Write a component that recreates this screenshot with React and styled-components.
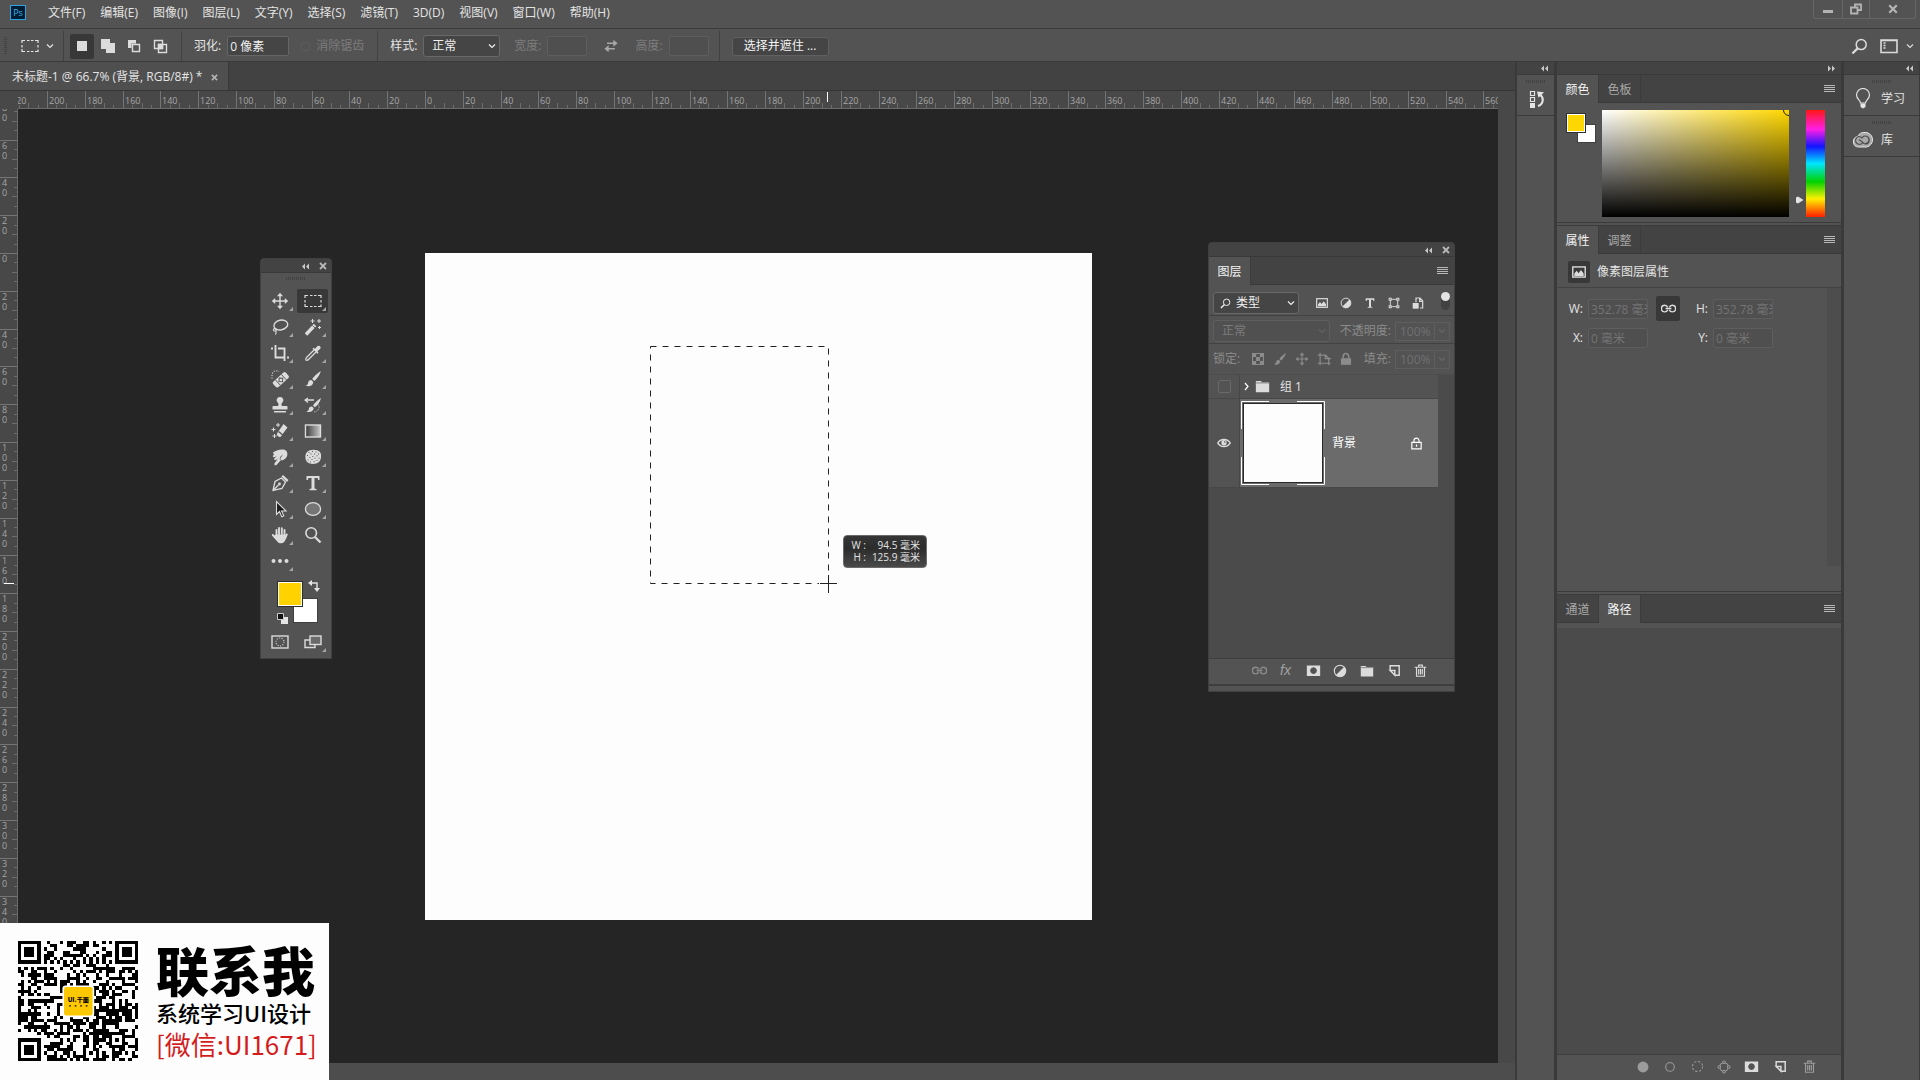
import React from 'react';
import styled, { createGlobalStyle } from 'styled-components';

const GlobalStyle = createGlobalStyle`
  * {
    box-sizing: border-box;
  }
  body {
    margin: 0;
    background: #535353;
    color: #e4e4e4;
    font-family: 'Open Sans', 'Noto Sans CJK SC', sans-serif;
    font-size: 12px;
    line-height: 16px;
    overflow: hidden;
  }
  button, input, select {
    font: inherit;
    color: inherit;
    margin: 0;
    padding: 0;
  }
  svg {
    display: block;
    flex: none;
  }
`;

/* ---------- layout ---------- */

const Page = styled.div`
  height: 100vh;
  display: flex;
  flex-direction: column;
`;

const MenuBar = styled.header`
  height: 29px;
  flex: none;
  display: flex;
  align-items: flex-start;
  padding-left: 10px;
  border-bottom: 1px solid #3a3a3a;
`;

const MenuNav = styled.nav`
  display: flex;
  gap: 15px;
  margin-left: 22px;
  padding-top: 5px;
`;

const MenuItem = styled.button`
  border: 0;
  background: none;
  white-space: nowrap;
`;

const PsLogo = styled.svg`
  margin-top: 5px;
`;

const WindowButtons = styled.div`
  display: flex;
  margin-left: auto;
  margin-right: 4px;
  border: 1px solid #666;
  border-top: 0;
  border-radius: 0 0 3px 3px;
`;

const WindowButton = styled.button`
  width: ${(p) => p.$width}px;
  height: 18px;
  display: flex;
  align-items: center;
  justify-content: center;
  border: 0;
  border-left: ${(p) => (p.$first ? '0' : '1px solid #666')};
  background: none;
  color: #b4b4b4;
`;

const OptionsBar = styled.div`
  height: 33px;
  flex: none;
  display: flex;
  align-items: center;
  padding: 2px 4px 0;
  border-bottom: 1px solid #3a3a3a;
  white-space: nowrap;
`;

const OptionGroup = styled.div`
  display: flex;
  align-items: center;
  gap: ${(p) => p.$gap || 6}px;
  height: 100%;
  padding: 0 ${(p) => p.$right || 12}px 0 ${(p) => p.$left || 12}px;
  border-right: ${(p) => (p.$last ? '0' : '1px solid #424242')};
  color: ${(p) => (p.$off ? '#7c7c7c' : '#e4e4e4')};
`;

const Body = styled.main`
  flex: 1;
  min-height: 0;
  display: flex;
`;

const DocumentArea = styled.section`
  flex: 1;
  min-width: 0;
  display: flex;
  flex-direction: column;
  background: #424242;
`;

const DocTabs = styled.div`
  height: 29px;
  flex: none;
  display: flex;
  border-bottom: 1px solid #353535;
`;

const DocTab = styled.div`
  display: flex;
  align-items: center;
  gap: 8px;
  padding: 2px 10px 0 12px;
  background: #4f4f4f;
  border-right: 1px solid #383838;
  white-space: nowrap;
`;

const IconButton = styled.button`
  display: flex;
  align-items: center;
  justify-content: center;
  width: ${(p) => p.$width || 20}px;
  height: ${(p) => p.$height || 20}px;
  flex: none;
  border: 0;
  border-radius: 2px;
  background: ${(p) => (p.$active ? '#383838' : 'none')};
  color: ${(p) => p.$color || '#dcdcdc'};
`;

const DocGrid = styled.div`
  flex: 1;
  min-height: 0;
  display: grid;
  grid-template-columns: 18px minmax(0, 1fr) 17px;
  grid-template-rows: 18px minmax(0, 1fr) 17px;
`;

const RulerBox = styled.div`
  background: #484848;
  overflow: hidden;
  border-right: ${(p) => (p.$side ? '1px solid #6a6a6a' : '0')};
  border-bottom: ${(p) => (p.$side ? '0' : '1px solid #6a6a6a')};
`;

const Gutter = styled.div`
  background: #484848;
`;

const BottomBar = styled.div`
  grid-column: 1 / 4;
  background: #4d4d4d;
`;

const Canvas = styled.div`
  position: relative;
  background: #252525;
`;

const Paper = styled.div`
  position: absolute;
  left: 407px;
  top: 144px;
  width: 667px;
  height: 667px;
  background: #fdfdfd;
`;

const Marquee = styled.svg`
  position: absolute;
  left: 632px;
  top: 237px;
`;

const SizeTip = styled.div`
  position: absolute;
  left: 825px;
  top: 426px;
  display: grid;
  grid-template-columns: 18px 1fr;
  width: 84px;
  padding: 3px 6px 4px 4px;
  border: 1px solid #6b6b6b;
  border-radius: 4px;
  background: linear-gradient(#363636, #2c2c2c 40%, #4a4a4a);
  font-size: 10px;
  line-height: 12px;
  text-align: right;
  white-space: nowrap;
`;

/* ---------- floating tool box ---------- */

const FloatWindow = styled.div`
  position: absolute;
  display: flex;
  flex-direction: column;
  left: ${(p) => p.$left}px;
  top: ${(p) => p.$top}px;
  width: ${(p) => p.$width}px;
  background: #535353;
  border: 1px solid #404040;
  border-radius: 4px 4px 0 0;
`;

const FloatHead = styled.div`
  display: flex;
  align-items: center;
  justify-content: flex-end;
  gap: 5px;
  height: 14px;
  padding: 1px 2px 0 0;
  background: #434343;
  border-bottom: 1px solid #393939;
  border-radius: 3px 3px 0 0;
`;

const GripRow = styled.div`
  display: flex;
  justify-content: center;
  height: ${(p) => p.$height}px;
  padding-top: ${(p) => p.$top || 0}px;
`;

const Grip = styled.div`
  width: ${(p) => (p.$small ? 3 : 20)}px;
  height: ${(p) => (p.$small ? 18 : 3)}px;
  background: repeating-linear-gradient(
    ${(p) => (p.$small ? '180deg' : '90deg')},
    #434343 0 1px,
    transparent 1px 2px
  );
`;

const ToolGrid = styled.div`
  display: grid;
  grid-template-columns: 31px 31px;
  grid-auto-rows: 24px;
  gap: 2px;
  padding: 0 3px;
`;

const ToolButton = styled.button`
  position: relative;
  display: flex;
  align-items: center;
  justify-content: center;
  border: 0;
  border-radius: 2px;
  background: ${(p) => (p.$active ? '#383838' : 'none')};
  color: #dcdcdc;
  &::after {
    content: '';
    position: absolute;
    right: 2px;
    bottom: 2px;
    border: 2px solid transparent;
    border-right-color: #a5a5a5;
    border-bottom-color: #a5a5a5;
    display: ${(p) => (p.$plain ? 'none' : 'block')};
  }
`;

const ToolSwatches = styled.div`
  position: relative;
  height: 57px;
`;

const Swatch = styled.button`
  position: absolute;
  left: ${(p) => p.$left}px;
  top: ${(p) => p.$top}px;
  width: ${(p) => p.$size}px;
  height: ${(p) => p.$size}px;
  border: 1px solid ${(p) => (p.$ring ? '#fff' : '#404040')};
  outline: ${(p) => (p.$ring ? '1px solid #2e2e2e' : '0')};
  background: ${(p) => p.$color};
`;

const SwatchIcon = styled.button`
  position: absolute;
  left: ${(p) => p.$left}px;
  top: ${(p) => p.$top}px;
  border: 0;
  background: none;
`;

/* ---------- form parts ---------- */

const Field = styled.input`
  width: ${(p) => p.$width}px;
  height: 20px;
  padding-left: 2px;
  border: 1px solid #666;
  border-radius: 2px;
  background: ${(p) => (p.disabled ? '#4f4f4f' : '#454545')};
  color: ${(p) => (p.disabled ? '#747474' : '#f0f0f0')};
  border-color: ${(p) => (p.disabled ? '#5e5e5e' : '#666')};
`;

const SelectBox = styled.span`
  position: relative;
  display: inline-flex;
  align-items: center;
  width: ${(p) => p.$width}px;
  height: 22px;
  color: ${(p) => (p.$off ? '#7c7c7c' : '#f0f0f0')};
  svg {
    position: absolute;
    pointer-events: none;
  }
  svg:last-child {
    right: 3px;
    opacity: ${(p) => (p.$off ? 0.4 : 1)};
  }
  svg:first-child {
    left: 7px;
  }
  select {
    appearance: none;
    width: 100%;
    height: 100%;
    padding-left: ${(p) => p.$indent || 8}px;
    border: 1px solid ${(p) => (p.$off ? '#5e5e5e' : '#686868')};
    border-radius: 3px;
    background: ${(p) => (p.$off ? '#505050' : '#454545')};
    opacity: 1;
  }
`;

const CheckBox = styled.input`
  appearance: none;
  width: ${(p) => p.$size}px;
  height: ${(p) => p.$size}px;
  border: 1px solid ${(p) => p.$line};
  border-radius: 2px;
`;

const TextButton = styled.button`
  width: 97px;
  height: 19px;
  border: 1px solid #606060;
  border-radius: 3px;
  background: #454545;
  color: #f4f4f4;
  line-height: 16px;
`;

/* ---------- panels ---------- */

const TabRow = styled.div`
  display: flex;
  height: 28px;
  flex: none;
  background: #434343;
`;

const PanelTab = styled.button`
  width: 42px;
  padding-top: 2px;
  border: 0;
  border-right: 1px solid #3c3c3c;
  border-bottom: ${(p) => (p.$active ? '0' : '1px solid #393939')};
  background: ${(p) => (p.$active ? '#535353' : 'none')};
  color: ${(p) => (p.$active ? '#f4f4f4' : '#a8a8a8')};
`;

const TabRest = styled.div`
  flex: 1;
  display: flex;
  align-items: center;
  justify-content: flex-end;
  padding-right: 6px;
  border-bottom: 1px solid #393939;
`;

const LayerRow = styled.div`
  display: flex;
  align-items: center;
  height: ${(p) => p.$height}px;
  padding: ${(p) => p.$top || 0}px 4px 0;
  border-bottom: 1px solid ${(p) => (p.$last ? '#4d4d4d' : '#424242')};
  color: ${(p) => (p.$off ? '#8c8c8c' : '#dcdcdc')};
  white-space: nowrap;
`;

const IconSet = styled.div`
  display: flex;
  align-items: center;
  gap: ${(p) => p.$gap}px;
  margin-left: ${(p) => p.$left || 0}px;
`;

const Toggle = styled.button`
  width: 9px;
  height: 18px;
  margin: 0 0 4px auto;
  padding: 0;
  border: 0;
  border-radius: 5px;
  background: #424242;
  &::before {
    content: '';
    display: block;
    width: 9px;
    height: 9px;
    margin-bottom: 9px;
    border-radius: 50%;
    background: #e4e4e4;
  }
`;

const Percent = styled.label`
  display: flex;
  align-items: center;
  gap: 4px;
  margin-left: auto;
  color: #8a8a8a;
`;

const PercentBox = styled.span`
  display: flex;
  align-items: center;
  border: 1px solid #5e5e5e;
  input {
    width: 39px;
    height: 17px;
    padding-left: 4px;
    border: 0;
    border-right: 1px solid #5e5e5e;
    background: none;
    color: #707070;
  }
  svg {
    margin: 0 2px;
    color: #666;
  }
`;

const LayerList = styled.div`
  height: 283px;
  background: #4b4b4b;
`;

const LayerItem = styled.div`
  display: flex;
  height: ${(p) => p.$height}px;
  margin-right: 16px;
  border-bottom: 1px solid #474747;
  background: #535353;
`;

const EyeCell = styled.div`
  display: flex;
  align-items: center;
  justify-content: center;
  width: 31px;
  border-right: 1px solid #474747;
`;

const LayerBody = styled.div`
  flex: 1;
  display: flex;
  align-items: center;
  gap: ${(p) => p.$gap}px;
  padding: 0 15px 0 ${(p) => p.$left}px;
  background: ${(p) => (p.$selected ? '#6b6b6b' : 'none')};
  color: #fff;
`;

const Thumb = styled.svg`
  display: block;
`;

const Spacer = styled.span`
  flex: 1;
`;

const PanelFoot = styled.div`
  display: flex;
  align-items: center;
  justify-content: flex-end;
  gap: 11px;
  height: 26px;
  flex: none;
  padding: 0 ${(p) => p.$right}px 2px 0;
  border-top: 1px solid #3e3e3e;
`;

const FloatFoot = styled.div`
  height: 7px;
  border-top: 2px solid #3e3e3e;
`;

/* ---------- right dock ---------- */

const Dock = styled.aside`
  display: flex;
  flex: none;
  gap: 3px;
  padding: 0 1px 0 2px;
  background: #3a3a3a;
`;

const DockColumn = styled.div`
  display: flex;
  flex-direction: column;
  width: ${(p) => p.$width}px;
  background: #535353;
`;

const DockHead = styled.div`
  display: flex;
  align-items: center;
  justify-content: flex-end;
  height: 13px;
  flex: none;
  padding-right: 5px;
  background: #434343;
  border-bottom: 1px solid #3a3a3a;
`;

const DockItem = styled.div`
  height: 41px;
  border-bottom: 1px solid #3a3a3a;
`;

const DockButton = styled.button`
  display: flex;
  align-items: center;
  justify-content: ${(p) => (p.$center ? 'center' : 'flex-start')};
  gap: 7px;
  width: 100%;
  height: 28px;
  padding-left: ${(p) => (p.$center ? 2 : 8)}px;
  border: 0;
  background: none;
  color: #e4e4e4;
`;

const ColorBody = styled.div`
  display: flex;
  height: 119px;
  padding: 7px 16px 0 9px;
`;

const ColorPair = styled.div`
  position: relative;
  width: 36px;
`;

const ColorField = styled.div`
  flex: 1;
  height: 107px;
  overflow: hidden;
  background: linear-gradient(to top, #000, transparent), linear-gradient(to right, #fff, #ffd700);
  display: flex;
  justify-content: flex-end;
`;

const HueMark = styled.div`
  width: 17px;
  padding: 86px 0 0 7px;
`;

const HueStrip = styled.div`
  width: 19px;
  height: 107px;
  background: linear-gradient(#ff1616, #ff1ee6 18%, #1414ff 34%, #00e6ff 50%, #00d200 67%, #fff000 83%, #ff1e00);
`;

const PanelSection = styled.section`
  display: flex;
  flex-direction: column;
  flex: ${(p) => (p.$grow ? '1' : 'none')};
  min-height: 0;
  border-top: ${(p) => (p.$first ? '0' : '4px double #3a3a3a')};
`;

const PropertyTitle = styled.div`
  display: flex;
  align-items: center;
  gap: 7px;
  height: 34px;
  padding: 2px 0 0 11px;
  border-bottom: 1px solid #424242;
`;

const PropertyBody = styled.div`
  display: flex;
  height: 303px;
`;

const PropertyGrid = styled.div`
  flex: 1;
  display: grid;
  grid-template-columns: 16px 60px 25px 16px 60px;
  grid-auto-rows: 25px;
  align-content: start;
  align-items: center;
  gap: 4px 8px;
  padding: 8px 0 0 7px;
  label {
    text-align: right;
    margin-right: -3px;
  }
`;

const ScrollTrack = styled.div`
  width: 14px;
  height: 278px;
  background: #4d4d4d;
`;

const PathList = styled.div`
  flex: 1;
  margin-top: 5px;
  background: #4b4b4b;
`;

/* ---------- contact card ---------- */

const ContactCard = styled.section`
  position: fixed;
  left: 0;
  bottom: 0;
  display: flex;
  gap: 18px;
  width: 329px;
  height: 157px;
  padding: 18px 0 0 18px;
  background: #fdfdfd;
  color: #000;
  font-family: 'Noto Sans CJK SC', sans-serif;
  white-space: nowrap;
`;

const CardText = styled.div`
  display: flex;
  flex-direction: column;
`;

const CardTitle = styled.h2`
  margin: 0;
  font-size: 53px;
  line-height: 56px;
  font-weight: 900;
`;

const CardSub = styled.p`
  margin: 0;
  font-size: 22px;
  line-height: 30px;
  font-weight: 500;
`;

const CardContact = styled.p`
  margin: 0;
  font-size: 26px;
  line-height: 34px;
  color: #d41c1c;
`;

/* ---------- icons ---------- */

const Icon = ({ size = 18, box = 18, children, ...rest }) => (
  <svg
    width={size}
    height={size}
    viewBox={`0 0 ${box} ${box}`}
    fill="none"
    stroke="currentColor"
    strokeWidth="1.4"
    aria-hidden="true"
    {...rest}
  >
    {children}
  </svg>
);

const Chevron = () => (
  <Icon size={10} box={10}>
    <path d="M2 3.5l3 3 3-3" strokeWidth="1.2" />
  </Icon>
);

const DoubleArrow = ({ right }) => (
  <Icon size={9} box={9} fill="#c8c8c8" stroke="none">
    <path d={right ? 'M1 1.5l3 3-3 3zM5 1.5l3 3-3 3z' : 'M4 1.5l-3 3 3 3zM8 1.5l-3 3 3 3z'} />
  </Icon>
);

const CloseIcon = ({ size = 8 }) => (
  <Icon size={size} box={8}>
    <path d="M1 1l6 6M7 1L1 7" strokeWidth="1.8" />
  </Icon>
);

const MenuIcon = () => (
  <Icon size={11} box={11}>
    <path d="M0 2.500h11M0 4.500h11M0 6.500h11M0 8.500h11" strokeWidth="1" />
  </Icon>
);

const MarqueeIcon = () => (
  <Icon>
    <path d="M1 6V3.5h3M6 3.5h2.5M10 3.5h2.5M14 3.5h3V6M17 8v2.5M17 12.500v2h-3M12.500 14.500h-2.500M8.500 14.500h-2.500M4 14.500h-3V12M1 10.500V8" strokeWidth="1.2" />
  </Icon>
);

const MoveIcon = ({ size }) => (
  <Icon size={size}>
    <path d="M9 3v12M3 9h12" />
    <path d="M9 .8l3 3.400H6zM9 17.200l3-3.400H6zM.8 9l3.400-3v6zM17.200 9l-3.400-3v6z" fill="currentColor" stroke="none" />
  </Icon>
);

const LassoIcon = () => (
  <Icon>
    <ellipse cx="9.800" cy="7" rx="7" ry="4.800" transform="rotate(-12 9.800 7)" />
    <path d="M4.500 10.500c-2.500-.5-2.800 2.500-.6 2.500 2.500 0 1.500-3 .2-1.500M4.500 13c1 1 .8 2.500-.3 3.500" strokeWidth="1.100" />
  </Icon>
);

const WandIcon = () => (
  <Icon>
    <path d="M2 16.500L11 7" strokeWidth="3.400" />
    <path d="M8.300 7.300l2.800 2.800" stroke="#535353" strokeWidth=".9" />
    <path d="M8.500 1v4M6.500 3h4M15 1v4M13 3h4M15.500 8v3M14 9.500h3" strokeWidth="1" />
  </Icon>
);

const CropIcon = ({ size }) => (
  <Icon size={size}>
    <path d="M0 4.500h2M4.500 1v12.500H14M7 4.500h6.500V17M16 13.500h2" strokeWidth="1.900" />
  </Icon>
);

const EyedropperIcon = () => (
  <Icon>
    <path d="M10 6L3 13c-1 1-1.500 2.500-1 3 .6.500 2 0 3-1l7-7" strokeWidth="1.300" />
    <path d="M8.500 4.800l1-1 1.500 1 2.300-2.500c1.800-1.800 4.600.8 2.700 2.700L13.500 7.200l1 1.500-1 1z" fill="currentColor" stroke="none" />
  </Icon>
);

const HealIcon = () => (
  <Icon>
    <g transform="rotate(-42 10 10)">
      <rect x="1.500" y="6" width="17" height="7.500" rx="2" fill="currentColor" stroke="none" />
      <path d="M6 6v7.500M14 6v7.500" stroke="#535353" strokeWidth=".9" />
      <path d="M10 7.300l2.500 2.500-2.500 2.500-2.500-2.500z" stroke="#535353" strokeWidth="1" />
    </g>
    <path d="M1 8.500V5.500a4.500 4.500 0 0 1 7-4" strokeDasharray="1 1.500" strokeWidth="1.200" />
  </Icon>
);

const BrushIcon = ({ size }) => (
  <Icon size={size} fill="currentColor" stroke="none">
    <path d="M16.800 1c-3 1.800-7 5.400-8.600 8l2 2c2.600-1.800 5.600-6 6.600-10zM7.300 10c-2 0-3 1.200-3.200 3-.2 1.300-1.200 2.200-2.600 2.600 3 1.600 7.400.800 7.800-3.600z" />
  </Icon>
);

const StampIcon = () => (
  <Icon fill="currentColor" stroke="none">
    <path d="M9 1a3.300 3.300 0 0 1 2 6c-.8.800-.6 2 0 3h4.500c.8 0 1 .5 1 1v2.500h-15V11c0-.5.200-1 1-1H7c.600-1 .800-2.200 0-3a3.300 3.300 0 0 1 2-6zM3 15h12v1.500H3z" />
  </Icon>
);

const HistoryBrushIcon = () => (
  <Icon>
    <path d="M17 2c-3 1.500-6.500 5-8 7.500l1.800 1.800C13.500 9.500 16 6 17 2zM8 10.500c-2.200 0-3 1-3.200 2.800-.2 1.200-1 1.800-2.300 2.200 3 1.300 6.800.5 7.200-3.400z" fill="currentColor" stroke="none" />
    <path d="M1 4h9M4 2L1 4l3 2.500" strokeWidth="1.300" />
    <path d="M14 8.500c2.500 2.500.5 7-4 7.500" strokeDasharray="1 1.300" strokeWidth="1" />
  </Icon>
);

const EraserIcon = () => (
  <Icon>
    <path d="M12.500 2l4 3.500-6.800 9.200c-1 1.300-4.800-1.700-3.700-3.200z" fill="currentColor" stroke="none" />
    <path d="M7.500 9.500l4 3.200" stroke="#535353" />
    <path d="M7 1v4M5 3h4M2.500 5.500v4M.5 7.500h4M3.500 12v4M1.500 14h4" strokeWidth="1" />
  </Icon>
);

const GradientIcon = () => (
  <Icon>
    <defs>
      <linearGradient id="toolGradient">
        <stop offset="0" stopColor="#3a3a3a" />
        <stop offset="1" stopColor="#c8c8c8" />
      </linearGradient>
    </defs>
    <rect x="1.500" y="3" width="15" height="12" fill="url(#toolGradient)" />
  </Icon>
);

const SmudgeIcon = () => (
  <Icon fill="currentColor" stroke="none">
    <path d="M2 4.500C4 2.500 9 1 12.500 1.500c3 .4 4.500 3 3.700 6-.5 2-2 3.500-3.500 4.300-1 .7-2 .7-2.700.3L5.500 17c-1.200 1-2.800-.3-1.900-1.700L7 10.500c-1 1-2.500 2-3.400 1.400-.8-.6-.3-1.500.4-2.100l2-2C4.500 9 3 9.500 2.200 8.900c-.8-.6-.2-1.500.8-2.200z" />
    <path d="M9.500 11.500c-1-1 .5-3.500 2-4.500" stroke="#535353" strokeWidth=".9" fill="none" />
  </Icon>
);

const SpongeIcon = () => (
  <Icon>
    <path d="M3 4c3-3 10-3 13 0 2 3 1 8-1 10-3 2.500-9 2.500-12 0-2.300-3-2-8 0-10z" fill="currentColor" stroke="none" />
    <path d="M4.500 4.500h1M8 3.500h1M11.500 4h1M14 6h1M6.500 6h1M10 6h1M3 7.500h1M12.500 7.800h1M8.300 8.500h1M5.300 9.500h1M10.500 10.200h1M14.500 10.200h1M3.500 12h1M7.500 11.500h1M12.500 12.500h1M9.700 13.800h1M6 14h1" stroke="#4c4c4c" strokeWidth=".9" />
  </Icon>
);

const PenIcon = () => (
  <Icon>
    <path d="M2 16.500l2-9 6.500-3.500 4 4-3.500 6.500zM2 16.500l5.500-5.500" strokeWidth="1.300" />
    <path d="M10.500 2.500L12 1l5.500 5L16 8z" fill="currentColor" stroke="none" />
    <circle cx="8.500" cy="10" r="1.400" fill="currentColor" stroke="none" />
  </Icon>
);

const TypeIcon = ({ size }) => (
  <Icon size={size} fill="currentColor" stroke="none">
    <path d="M2.500 2h13v4h-1.300L13.500 4h-3v10.500l2 .5v1.200h-7V15l2-.5V4h-3L3.800 6H2.500z" />
  </Icon>
);

const ArrowIcon = () => (
  <Icon>
    <path d="M5.500 1.500v13l3-3 2.300 5.300 2-1L10.500 11H15z" fill="#1c1c1c" strokeWidth="1.100" />
  </Icon>
);

const EllipseIcon = () => (
  <Icon>
    <ellipse cx="9" cy="9" rx="7.600" ry="6.300" fill="#757575" strokeWidth="1.300" />
  </Icon>
);

const HandIcon = () => (
  <Icon>
    <path d="M5.500 9V4M8 8.500V2M10.800 8.500V2.200M13.500 9.500V4M15.800 8.500l-1.600 4M1.800 9l3.500 3.500" strokeWidth="1.900" strokeLinecap="round" />
    <path d="M4.500 8.500h10v4c0 3-2 4.800-4.500 4.800-2 0-3-.8-4.200-2.300L2.500 11z" fill="currentColor" stroke="none" />
  </Icon>
);

const ZoomIcon = ({ size, flip }) => (
  <Icon size={size}>
    <g transform={flip ? 'translate(18 0) scale(-1 1)' : undefined}>
      <circle cx="7.200" cy="7" r="5.300" strokeWidth="1.600" />
      <path d="M11 11l5.500 5.500" strokeWidth="2.300" />
    </g>
  </Icon>
);

const DotsIcon = () => (
  <Icon fill="currentColor" stroke="none">
    <circle cx="2.500" cy="9" r="2" />
    <circle cx="9" cy="9" r="2" />
    <circle cx="15.500" cy="9" r="2" />
  </Icon>
);

const QuickMaskIcon = () => (
  <Icon>
    <rect x="1" y="3" width="16" height="12" />
    <circle cx="9" cy="9" r="4" strokeDasharray="1 1.500" strokeWidth="1.100" />
  </Icon>
);

const ScreenIcon = () => (
  <Icon>
    <path d="M6 7H1v7.500h10V12" />
    <rect x="6" y="3" width="11" height="8.500" fill="#6b6b6b" />
  </Icon>
);

const ImageIcon = ({ size }) => (
  <Icon size={size}>
    <rect x="1" y="2.500" width="16" height="13" strokeWidth="1.800" />
    <path d="M3 14v-3l3-3.500 2.500 3 3-4 3.500 4.500v3z" fill="currentColor" stroke="none" />
  </Icon>
);

const AdjustIcon = ({ size }) => (
  <Icon size={size}>
    <circle cx="9" cy="9" r="7.300" />
    <path d="M14.200 3.800A7.300 7.300 0 0 1 3.800 14.200z" fill="currentColor" stroke="none" />
  </Icon>
);

const ShapeIcon = ({ size }) => (
  <Icon size={size}>
    <path d="M4 3.500h10M4 14.500h10M3.500 4v10M14.500 4v10" />
    <path d="M1 1h4.500v4.500H1zM12.500 1H17v4.500h-4.500zM1 12.500h4.500V17H1zM12.500 12.500H17V17h-4.500z" fill="currentColor" stroke="none" />
    <path d="M2.500 2.500h1.500v1.500H2.500zM14 2.500h1.500v1.500H14zM2.500 14h1.500v1.500H2.500zM14 14h1.500v1.500H14z" fill="#535353" stroke="none" />
  </Icon>
);

const SmartIcon = ({ size }) => (
  <Icon size={size}>
    <path d="M6 8V1.500h6l4 4v11h-4M11.500 2v4.500h4" strokeWidth="1.800" />
    <path d="M1 9h9v8.500H1z" fill="currentColor" stroke="none" />
  </Icon>
);

const CheckerIcon = ({ size }) => (
  <Icon size={size}>
    <rect x="2" y="2" width="14" height="14" />
    <path d="M2 2h4.500v4.500H2zM11.500 2H16v4.500h-4.500zM6.500 6.500h5v5h-5zM2 11.500h4.500V16H2zM11.500 11.500H16V16h-4.500z" fill="currentColor" stroke="none" />
  </Icon>
);

const ArtboardIcon = ({ size }) => (
  <Icon size={size}>
    <path d="M4 1v16M1 4h10l4 4v9M1 14.500h16.500M10.500 4v4.500H18" strokeWidth="1.500" />
  </Icon>
);

const SolidLockIcon = ({ size }) => (
  <Icon size={size}>
    <path d="M5.500 8V5.500a3.500 3.500 0 0 1 7 0V8" strokeWidth="2" />
    <path d="M2.500 8h13v8.500h-13z" fill="currentColor" stroke="none" />
  </Icon>
);

const LockIcon = ({ size }) => (
  <Icon size={size}>
    <path d="M5.500 7.500V5a3.500 3.500 0 0 1 7 0v2.500M2.500 7.500h13v9h-13zM9 10.500v3" strokeWidth="1.600" />
  </Icon>
);

const FolderIcon = ({ size }) => (
  <Icon size={size} fill="#dcdcdc" stroke="none">
    <path d="M1 2.500h6L8.500 4H17v12H1z" />
    <path d="M1 4.700h16" stroke="#535353" strokeWidth=".8" />
  </Icon>
);

const EyeIcon = () => (
  <Icon size={14} color="#dcdcdc">
    <path d="M1 9c3.500-6 12.500-6 16 0-3.500 6-12.500 6-16 0z" strokeWidth="1.900" />
    <circle cx="9" cy="8.700" r="3.400" fill="currentColor" stroke="none" />
    <circle cx="10" cy="7.800" r="1" fill="#535353" stroke="none" />
  </Icon>
);

const LinkIcon = ({ size }) => (
  <Icon size={size}>
    <path d="M8 7.500C7.300 5.600 5.500 5 4.500 5a4 4 0 0 0 0 8c1.500 0 3-.9 3.500-2.500M10 7.500C10.700 5.600 12.500 5 13.500 5a4 4 0 0 1 0 8c-1.500 0-3-.9-3.500-2.500M5.500 9h7" strokeWidth="1.700" />
  </Icon>
);

const FxIcon = () => (
  <svg width="16" height="16" viewBox="0 0 16 16" fill="currentColor" aria-hidden="true">
    <text x="2" y="12" fontSize="14" fontStyle="italic" fontFamily="Liberation Sans, sans-serif">fx</text>
  </svg>
);

const MaskIcon = ({ size }) => (
  <Icon size={size} fill="currentColor" stroke="none">
    <path fillRule="evenodd" d="M1 3h16v12.500H1zM9 5.200a4 4 0 1 0 .01 0z" />
  </Icon>
);

const NewLayerIcon = ({ size }) => (
  <Icon size={size}>
    <path d="M3 8V2.500h12.500v13H10M3 9h6.500v6.500z" strokeWidth="2" />
  </Icon>
);

const TrashIcon = ({ size }) => (
  <Icon size={size}>
    <path d="M1 4.500h16M6.500 4V1.500h5V4M3.500 4.500V17h11V4.500M6.500 7v7.500M9 7v7.500M11.500 7v7.500" strokeWidth="1.600" />
  </Icon>
);

const SwapIcon = () => (
  <Icon size={14}>
    <path d="M4 5.500h9M14 12.500H5" strokeWidth="2" />
    <path d="M12 1l5.500 4.500L12 10zM6 8L.5 12.500 6 17z" fill="currentColor" stroke="none" />
  </Icon>
);

const HistoryIcon = () => (
  <Icon>
    <path d="M2.500 1.500h4v4h-4zM2.500 7.500h4v4h-4z" strokeWidth="1.200" />
    <path d="M2 13h5v5H2z" fill="currentColor" stroke="none" />
    <path d="M10 16c5-1.500 6.500-7.500 2.500-11" strokeWidth="2" />
    <path d="M9 1.500l7 .8-5.500 5.500z" fill="currentColor" stroke="none" />
  </Icon>
);

const BulbIcon = () => (
  <Icon size={22} box={22}>
    <path d="M8.500 15c0-2.500-4-4-4-8a6.500 6.500 0 0 1 13 0c0 4-4 5.500-4 8z" strokeWidth="1.200" />
    <path d="M8.500 15.500h5v3.500l-2.500 1.500-2.500-1.500z" fill="currentColor" stroke="none" />
  </Icon>
);

const CloudIcon = () => (
  <Icon size={22} box={22}>
    <path d="M6.500 18a5.300 5.300 0 0 1-.8-10.500C7 4.500 9.500 3.500 12 3.500a7.300 7.300 0 0 1 2.500 14.500z" fill="#a8a8a8" strokeWidth="1" />
    <path d="M13 14.500a3.700 3.700 0 1 0-3-5.500l-1.500-1C6 6.500 3.300 9 3.600 12c.4 3.500 5.400 4.700 7.400 1.500M7 10.500l5 4c4 2 7-3 4-6" stroke="#4e4e4e" strokeWidth="1.100" />
  </Icon>
);

/* ---------- data ---------- */

const menus = ['文件(F)', '编辑(E)', '图像(I)', '图层(L)', '文字(Y)', '选择(S)', '滤镜(T)', '3D(D)', '视图(V)', '窗口(W)', '帮助(H)'];

const tools = [
  ['移动', MoveIcon],
  ['矩形选框', MarqueeIcon],
  ['套索', LassoIcon],
  ['魔棒', WandIcon],
  ['裁剪', CropIcon],
  ['吸管', EyedropperIcon],
  ['修复画笔', HealIcon],
  ['画笔', BrushIcon],
  ['仿制图章', StampIcon],
  ['历史记录画笔', HistoryBrushIcon],
  ['橡皮擦', EraserIcon],
  ['渐变', GradientIcon],
  ['涂抹', SmudgeIcon],
  ['海绵', SpongeIcon],
  ['钢笔', PenIcon],
  ['横排文字', TypeIcon],
  ['路径选择', ArrowIcon],
  ['椭圆', EllipseIcon],
  ['抓手', HandIcon],
  ['缩放', ZoomIcon],
  ['更多', DotsIcon],
];

// 20 mm on the ruler at 66.7%
const STEP = 37.8;

const Ruler = ({ origin, from, to, marker, side }) => {
  const marks = [];
  for (let i = from; i <= to; i += 1) {
    marks.push({ label: String(Math.abs(i * 20)), at: origin + i * STEP });
  }
  const line = (at, start) => {
    const p = Math.round(at) + 0.5;
    return side ? `M${start} ${p}H18` : `M${p} ${start}V18`;
  };
  return (
    <svg width="100%" height="100%" fill="#a6a6a6" fontFamily="Open Sans, sans-serif" fontSize="9">
      {marks.map((m) => (
        <g key={m.at}>
          <path d={line(m.at, 0)} stroke="#747474" />
          {[1, 2, 3].map((n) => (
            <path key={n} d={line(m.at + (n * STEP) / 4, n === 2 ? 12 : 14)} stroke="#6c6c6c" />
          ))}
          {side ? (
            m.label.split('').map((d, n) => (
              <text key={n} x="2" y={Math.round(m.at) + 9 + n * 10}>{d}</text>
            ))
          ) : (
            <text x={Math.round(m.at) + 2} y="13">{m.label}</text>
          )}
        </g>
      ))}
      <path d={side ? `M4 ${marker}.5H14` : `M${marker}.5 1V11`} stroke="#fff" />
    </svg>
  );
};

const QR = 37;

const inFinder = (x, y) => {
  const spots = [[0, 0], [QR - 7, 0], [0, QR - 7]];
  for (const [fx, fy] of spots) {
    const dx = x - fx;
    const dy = y - fy;
    if (dx >= -1 && dx <= 7 && dy >= -1 && dy <= 7) {
      const r = Math.max(Math.abs(dx - 3), Math.abs(dy - 3));
      return r === 3 || r <= 1 ? 1 : 0;
    }
  }
  const r = Math.max(Math.abs(x - 30), Math.abs(y - 30));
  if (r <= 2) return r === 1 ? 0 : 1;
  return null;
};

const qrPath = () => {
  let seed = 1671;
  let d = '';
  for (let y = 0; y < QR; y += 1) {
    for (let x = 0; x < QR; x += 1) {
      seed = (seed * 1103515245 + 12345) % 2147483648;
      const fixed = inFinder(x, y);
      const timing = x === 6 || y === 6 ? (x + y + 1) % 2 : null;
      const on = fixed ?? timing ?? (seed > 1040000000 ? 1 : 0);
      if (on) d += `M${x} ${y}h1v1h-1z`;
    }
  }
  return d;
};

const QrCode = () => (
  <svg width="120" height="120" viewBox={`0 0 ${QR} ${QR}`} role="img" aria-label="QR">
    <path d={qrPath()} fill="#000" shapeRendering="crispEdges" />
    <rect x="13.700" y="13.700" width="9.800" height="9.800" rx="1" fill="#fff" />
    <rect x="14.200" y="14.200" width="8.800" height="8.800" rx=".7" fill="#fcc800" />
    <text x="18.600" y="18.800" fontSize="1.900" fontWeight="900" textAnchor="middle">UI.千面</text>
    <path d="M15.800 20h.5M17.500 20h.5M19.200 20h.5M20.900 20h.5" stroke="#000" strokeWidth=".4" />
  </svg>
);

/* ---------- sections ---------- */

const Options = () => (
  <OptionsBar>
    <Grip $small />
    <OptionGroup $left={14} $right={8}>
      <MarqueeIcon />
      <Chevron />
    </OptionGroup>
    <OptionGroup $left={6} $right={9} $gap={2}>
      <IconButton $width={24} $height={25} $active aria-label="新选区">
        <Icon size={12} box={12} fill="currentColor" stroke="none"><path d="M1 1h10v10H1z" /></Icon>
      </IconButton>
      <IconButton $width={24} aria-label="添加到选区">
        <Icon size={16} box={16} fill="currentColor" stroke="none"><path d="M1 1h9v4h5v10H6v-4H1z" /></Icon>
      </IconButton>
      <IconButton $width={24} aria-label="从选区减去">
        <Icon size={14} box={14}><path d="M1 1h8v3.500H4.500V9H1z" fill="currentColor" stroke="none" /><path d="M5.500 5.500h7v7h-7z" /></Icon>
      </IconButton>
      <IconButton $width={24} aria-label="与选区交叉">
        <Icon size={15} box={15}><path d="M1.500 1.500h8v8h-8zM5.500 5.500h8v8h-8z" /><path d="M5.500 5.500h4v4h-4z" fill="currentColor" /></Icon>
      </IconButton>
    </OptionGroup>
    <OptionGroup>
      <label htmlFor="feather">羽化:</label>
      <Field id="feather" $width={62} defaultValue="0 像素" />
      <OptionGroup $off $last $left={6} $right={1}>
        <CheckBox type="checkbox" id="alias" disabled $size={9} $line="#5c5c5c" />
        <label htmlFor="alias">消除锯齿</label>
      </OptionGroup>
    </OptionGroup>
    <OptionGroup $right={9}>
      <label htmlFor="style">样式:</label>
      <SelectBox $width={77}>
        <select id="style"><option>正常</option></select>
        <Chevron />
      </SelectBox>
      <OptionGroup $off $last $left={8} $right={1}>
        <label htmlFor="optWidth">宽度:</label>
        <Field id="optWidth" $width={40} disabled />
      </OptionGroup>
      <IconButton $width={34} $color="#a8a8a8" aria-label="互换"><SwapIcon /></IconButton>
      <OptionGroup $off $last $left={1} $right={1}>
        <label htmlFor="optHeight">高度:</label>
        <Field id="optHeight" $width={40} disabled />
      </OptionGroup>
    </OptionGroup>
    <OptionGroup $last>
      <TextButton>选择并遮住 ...</TextButton>
    </OptionGroup>
    <Spacer />
    <IconButton $width={30} aria-label="搜索"><ZoomIcon size={17} flip /></IconButton>
    <IconButton $width={30} aria-label="工作区">
      <Icon><path d="M1 3h16v12.500H1zM1 3.500h16M3.500 6h2M3.500 8.500h2M3.500 11h2" strokeWidth="1.600" /></Icon>
    </IconButton>
    <IconButton $width={12} aria-label="工作区菜单"><Chevron /></IconButton>
  </OptionsBar>
);

const ToolBox = () => (
  <FloatWindow $left={242} $top={149} $width={72}>
    <FloatHead>
      <IconButton $width={14} $height={12} aria-label="折叠"><DoubleArrow /></IconButton>
      <IconButton $width={12} $height={12} $color="#b8b8b8" aria-label="关闭"><CloseIcon /></IconButton>
    </FloatHead>
    <GripRow $height={16} $top={4}><Grip /></GripRow>
    <ToolGrid>
      {tools.map(([name, Glyph]) => (
        <ToolButton key={name} aria-label={name} $active={name === '矩形选框'} $plain={name === '缩放'}>
          <Glyph />
        </ToolButton>
      ))}
    </ToolGrid>
    <ToolSwatches>
      <Swatch $left={32} $top={25} $size={25} $color="#fff" aria-label="背景色" />
      <Swatch $left={17} $top={9} $size={24} $color="#ffd200" $ring aria-label="前景色" />
      <SwatchIcon $left={47} $top={7} aria-label="互换颜色">
        <Icon size={12} box={12}><path d="M3 3h6v6" /><path d="M4 0v6L0 3zM6 8h6l-3 4z" fill="currentColor" stroke="none" /></Icon>
      </SwatchIcon>
      <SwatchIcon $left={16} $top={40} aria-label="默认颜色">
        <Icon size={11} box={11} stroke="none"><path d="M4 4h7v7H4z" fill="#e4e4e4" /><path d="M.500.500h6v6h-6z" fill="#111" stroke="#ccc" strokeWidth="1" /></Icon>
      </SwatchIcon>
    </ToolSwatches>
    <ToolGrid>
      <ToolButton $plain aria-label="快速蒙版"><QuickMaskIcon /></ToolButton>
      <ToolButton aria-label="屏幕模式"><ScreenIcon /></ToolButton>
    </ToolGrid>
    <GripRow $height={4} />
  </FloatWindow>
);

const LayersPanel = () => (
  <FloatWindow $left={1190} $top={133} $width={247}>
    <FloatHead>
      <IconButton $width={14} $height={12} aria-label="折叠"><DoubleArrow /></IconButton>
      <IconButton $width={12} $height={12} $color="#b8b8b8" aria-label="关闭"><CloseIcon /></IconButton>
    </FloatHead>
    <TabRow>
      <PanelTab $active>图层</PanelTab>
      <TabRest><IconButton $width={11} $color="#b8b8b8" aria-label="面板菜单"><MenuIcon /></IconButton></TabRest>
    </TabRow>
    <LayerRow $height={31} $top={6}>
      <SelectBox $width={86} $indent={22}>
        <ZoomIcon size={11} flip />
        <select aria-label="筛选"><option>类型</option></select>
        <Chevron />
      </SelectBox>
      <IconSet $gap={12} $left={17}>
        <ImageIcon size={12} />
        <AdjustIcon size={12} />
        <TypeIcon size={12} />
        <ShapeIcon size={12} />
        <SmartIcon size={12} />
      </IconSet>
      <Toggle aria-label="筛选开关" />
    </LayerRow>
    <LayerRow $height={28} $top={3} $off>
      <SelectBox $width={117} $off>
        <select aria-label="混合模式" disabled><option>正常</option></select>
        <Chevron />
      </SelectBox>
      <Percent>
        不透明度:
        <PercentBox><input defaultValue="100%" disabled /><Chevron /></PercentBox>
      </Percent>
    </LayerRow>
    <LayerRow $height={31} $off $last>
      <span>锁定:</span>
      <IconSet $gap={8} $left={11}>
        <CheckerIcon size={14} />
        <BrushIcon size={14} />
        <MoveIcon size={14} />
        <ArtboardIcon size={14} />
        <SolidLockIcon size={14} />
      </IconSet>
      <Percent>
        填充:
        <PercentBox><input defaultValue="100%" disabled /><Chevron /></PercentBox>
      </Percent>
    </LayerRow>
    <LayerList>
      <LayerItem $height={24}>
        <EyeCell><CheckBox type="checkbox" aria-label="显示组 1" $size={13} $line="#696969" /></EyeCell>
        <LayerBody $gap={4} $left={2}>
          <Icon size={9} box={9}><path d="M3 1l3 3.500L3 8" strokeWidth="1.200" /></Icon>
          <FolderIcon size={15} />
          <OptionGroup $last $left={6}>组 1</OptionGroup>
        </LayerBody>
      </LayerItem>
      <LayerItem $height={89}>
        <EyeCell><EyeIcon /></EyeCell>
        <LayerBody $gap={7} $left={1} $selected>
          <Thumb width="84" height="84" viewBox="0 0 84 84" fill="none">
            <path d="M.5 28V.5H28M56 .5h27.500V28M83.500 56v27.500H56M28 83.500H.5V56" stroke="#fff" />
            <rect x="2.500" y="2.500" width="79" height="79" fill="#fdfdfd" stroke="#2a2a2a" />
          </Thumb>
          <span>背景</span>
          <Spacer />
          <LockIcon size={13} />
        </LayerBody>
      </LayerItem>
    </LayerList>
    <PanelFoot $right={27}>
      <IconButton $width={16} $color="#8c8c8c" aria-label="链接图层"><LinkIcon size={15} /></IconButton>
      <IconButton $width={16} $color="#a0a0a0" aria-label="图层样式"><FxIcon /></IconButton>
      <IconButton $width={16} aria-label="蒙版"><MaskIcon size={15} /></IconButton>
      <IconButton $width={16} aria-label="调整图层"><AdjustIcon size={14} /></IconButton>
      <IconButton $width={16} aria-label="新建组"><FolderIcon size={14} /></IconButton>
      <IconButton $width={16} aria-label="新建图层"><NewLayerIcon size={13} /></IconButton>
      <IconButton $width={14} aria-label="删除"><TrashIcon size={13} /></IconButton>
    </PanelFoot>
    <FloatFoot />
  </FloatWindow>
);

const PanelTabs = ({ names, active }) => (
  <TabRow>
    {names.map((name) => (
      <PanelTab key={name} $active={name === active}>{name}</PanelTab>
    ))}
    <TabRest><IconButton $width={11} $color="#b8b8b8" aria-label="面板菜单"><MenuIcon /></IconButton></TabRest>
  </TabRow>
);

const RightDock = () => (
  <Dock>
    <DockColumn $width={37}>
      <DockHead><DoubleArrow /></DockHead>
      <DockItem>
        <GripRow $height={10} $top={5}><Grip /></GripRow>
        <DockButton $center aria-label="历史记录"><HistoryIcon /></DockButton>
      </DockItem>
    </DockColumn>
    <DockColumn $width={284}>
      <DockHead><DoubleArrow right /></DockHead>
      <PanelSection $first>
        <PanelTabs names={['颜色', '色板']} active="颜色" />
        <ColorBody>
          <ColorPair>
            <Swatch $left={11} $top={14} $size={19} $color="#fff" aria-label="背景色" />
            <Swatch $left={1} $top={4} $size={18} $color="#ffd700" $ring aria-label="前景色" />
          </ColorPair>
          <ColorField>
            <svg width="7" height="7" viewBox="0 0 7 7" fill="none" stroke="#222"><circle cx="7" cy="0" r="5.500" /></svg>
          </ColorField>
          <HueMark>
            <svg width="8" height="8" viewBox="0 0 8 8" fill="#e4e4e4"><path d="M0 1.500L2 .5l5.500 3.500L2 7.500 0 6.500z" /></svg>
          </HueMark>
          <HueStrip />
        </ColorBody>
      </PanelSection>
      <PanelSection>
        <PanelTabs names={['属性', '调整']} active="属性" />
        <PropertyTitle>
          <IconButton $width={22} $height={22} $active aria-label="像素图层"><ImageIcon size={14} /></IconButton>
          <span>像素图层属性</span>
        </PropertyTitle>
        <PropertyBody>
          <PropertyGrid>
            <label htmlFor="pw">W:</label>
            <Field id="pw" $width={60} defaultValue="352.78 毫米" disabled />
            <IconButton $width={24} $height={25} $active aria-label="链接"><LinkIcon size={15} /></IconButton>
            <label htmlFor="ph">H:</label>
            <Field id="ph" $width={60} defaultValue="352.78 毫米" disabled />
            <label htmlFor="px">X:</label>
            <Field id="px" $width={60} defaultValue="0 毫米" disabled />
            <span />
            <label htmlFor="py">Y:</label>
            <Field id="py" $width={60} defaultValue="0 毫米" disabled />
          </PropertyGrid>
          <ScrollTrack />
        </PropertyBody>
      </PanelSection>
      <PanelSection $grow>
        <PanelTabs names={['通道', '路径']} active="路径" />
        <PathList />
        <PanelFoot $right={24}>
          <IconButton $width={16} $color="#9c9c9c" aria-label="填充路径"><Icon size={14} fill="currentColor" stroke="none"><circle cx="9" cy="9" r="7" /></Icon></IconButton>
          <IconButton $width={16} $color="#8c8c8c" aria-label="描边路径"><Icon size={12}><circle cx="9" cy="9" r="6.500" strokeWidth="2" /></Icon></IconButton>
          <IconButton $width={16} $color="#9c9c9c" aria-label="载入选区"><Icon size={13}><circle cx="9" cy="9" r="7" strokeDasharray="3 2.500" /></Icon></IconButton>
          <IconButton $width={16} $color="#9c9c9c" aria-label="生成路径"><Icon size={14}><circle cx="9" cy="9" r="5.500" /><path d="M7.500 1.500h3v3h-3zM7.500 13.500h3v3h-3zM1.500 7.500h3v3h-3zM13.500 7.500h3v3h-3z" fill="#535353" strokeWidth="1.200" /></Icon></IconButton>
          <IconButton $width={16} aria-label="蒙版"><MaskIcon size={15} /></IconButton>
          <IconButton $width={20} aria-label="新建路径"><NewLayerIcon size={13} /></IconButton>
          <IconButton $width={16} $color="#9c9c9c" aria-label="删除路径"><TrashIcon size={13} /></IconButton>
        </PanelFoot>
      </PanelSection>
    </DockColumn>
    <DockColumn $width={75}>
      <DockHead><DoubleArrow /></DockHead>
      <DockItem>
        <GripRow $height={10} $top={5}><Grip /></GripRow>
        <DockButton><BulbIcon />学习</DockButton>
      </DockItem>
      <DockItem>
        <GripRow $height={10} $top={5}><Grip /></GripRow>
        <DockButton><CloudIcon />库</DockButton>
      </DockItem>
    </DockColumn>
  </Dock>
);

const Contact = () => (
  <ContactCard>
    <QrCode />
    <CardText>
      <CardTitle>联系我</CardTitle>
      <CardSub>系统学习UI设计</CardSub>
      <CardContact>[微信:UI1671]</CardContact>
    </CardText>
  </ContactCard>
);

const App = () => {
  return (
    <Page>
      <GlobalStyle />
      <MenuBar>
        <PsLogo width="16" height="15" viewBox="0 0 16 15">
          <rect x=".5" y=".5" width="15" height="14" fill="#001d33" stroke="#2fa3e0" />
          <text x="8" y="11" fontSize="9" textAnchor="middle" fill="#3fb4f0">Ps</text>
        </PsLogo>
        <MenuNav>
          {menus.map((name) => (
            <MenuItem key={name}>{name}</MenuItem>
          ))}
        </MenuNav>
        <WindowButtons>
          <WindowButton $width={28} $first aria-label="最小化">
            <Icon size={12} box={12}><path d="M1 8.500h10" strokeWidth="3" /></Icon>
          </WindowButton>
          <WindowButton $width={27} aria-label="还原">
            <Icon size={12} box={12}><path d="M1 4.500h6.500v6H1zM5 4V1.500h6V7H8" strokeWidth="1.800" /></Icon>
          </WindowButton>
          <WindowButton $width={46} aria-label="关闭"><CloseIcon size={10} /></WindowButton>
        </WindowButtons>
      </MenuBar>
      <Options />
      <Body>
        <DocumentArea>
          <DocTabs>
            <DocTab>
              <span>未标题-1 @ 66.7% (背景, RGB/8#) *</span>
              <IconButton $width={8} $color="#b4b4b4" aria-label="关闭文档"><CloseIcon size={7} /></IconButton>
            </DocTab>
          </DocTabs>
          <DocGrid>
            <Gutter />
            <RulerBox><Ruler origin={407} from={-11} to={28} marker={809} /></RulerBox>
            <Gutter />
            <RulerBox $side><Ruler origin={144} from={-4} to={21} marker={474} side /></RulerBox>
            <Canvas>
              <Paper />
              <Marquee width="190" height="250" fill="none" stroke="#222">
                <path d="M.5 .5H178.500V237.500H.5z" strokeDasharray="6 6" />
                <path d="M169 237.500h19M178.500 228v19" stroke="#fdfdfd" strokeWidth="3" />
                <path d="M170 237.500h17M178.500 229v18" />
              </Marquee>
              <SizeTip>
                <span>W :</span>
                <span>94.5 毫米</span>
                <span>H :</span>
                <span>125.9 毫米</span>
              </SizeTip>
              <ToolBox />
              <LayersPanel />
            </Canvas>
            <Gutter />
            <BottomBar />
          </DocGrid>
        </DocumentArea>
        <RightDock />
      </Body>
      <Contact />
    </Page>
  );
};

export default App;
